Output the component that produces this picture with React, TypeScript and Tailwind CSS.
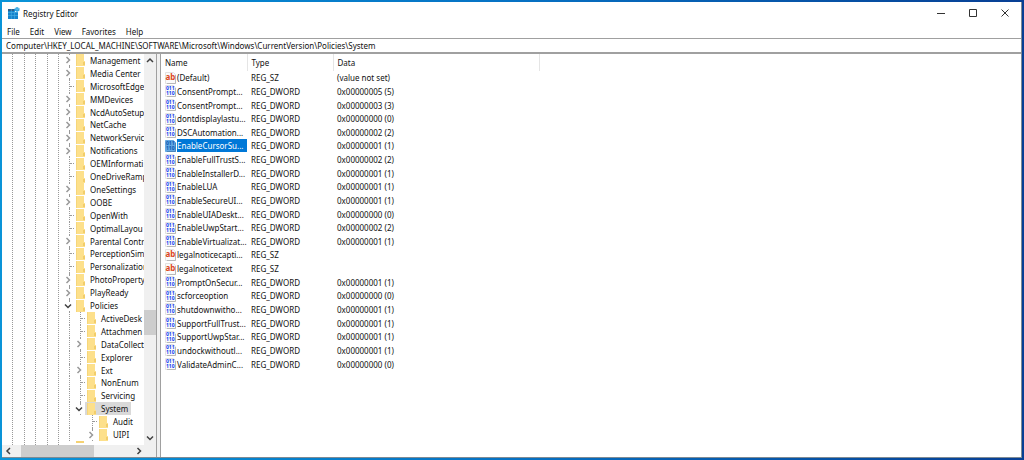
import clsx from "clsx";

type TreeNode = {
	label: string;
	depth: number;
	state?: "open" | "closed";
	selected?: boolean;
};

type RegistryValue = {
	name: string;
	type: "REG_SZ" | "REG_DWORD";
	data: string;
	selected?: boolean;
};

const MENUS = ["File", "Edit", "View", "Favorites", "Help"];

const TREE: TreeNode[] = [
	{ label: "Management", depth: 0, state: "closed" },
	{ label: "Media Center", depth: 0, state: "closed" },
	{ label: "MicrosoftEdge", depth: 0 },
	{ label: "MMDevices", depth: 0, state: "closed" },
	{ label: "NcdAutoSetup", depth: 0, state: "closed" },
	{ label: "NetCache", depth: 0, state: "closed" },
	{ label: "NetworkServic", depth: 0, state: "closed" },
	{ label: "Notifications", depth: 0, state: "closed" },
	{ label: "OEMInformati", depth: 0 },
	{ label: "OneDriveRamp", depth: 0 },
	{ label: "OneSettings", depth: 0, state: "closed" },
	{ label: "OOBE", depth: 0, state: "closed" },
	{ label: "OpenWith", depth: 0 },
	{ label: "OptimalLayou", depth: 0 },
	{ label: "Parental Contr", depth: 0, state: "closed" },
	{ label: "PerceptionSim", depth: 0 },
	{ label: "Personalization", depth: 0 },
	{ label: "PhotoProperty", depth: 0, state: "closed" },
	{ label: "PlayReady", depth: 0, state: "closed" },
	{ label: "Policies", depth: 0, state: "open" },
	{ label: "ActiveDesk", depth: 1 },
	{ label: "Attachmen", depth: 1 },
	{ label: "DataCollect", depth: 1, state: "closed" },
	{ label: "Explorer", depth: 1 },
	{ label: "Ext", depth: 1, state: "closed" },
	{ label: "NonEnum", depth: 1 },
	{ label: "Servicing", depth: 1 },
	{ label: "System", depth: 1, state: "open", selected: true },
	{ label: "Audit", depth: 2 },
	{ label: "UIPI", depth: 2, state: "closed" }
];

const VALUES: RegistryValue[] = [
	{ name: "(Default)", type: "REG_SZ", data: "(value not set)" },
	{ name: "ConsentPrompt...", type: "REG_DWORD", data: "0x00000005 (5)" },
	{ name: "ConsentPrompt...", type: "REG_DWORD", data: "0x00000003 (3)" },
	{ name: "dontdisplaylastu...", type: "REG_DWORD", data: "0x00000000 (0)" },
	{ name: "DSCAutomation...", type: "REG_DWORD", data: "0x00000002 (2)" },
	{ name: "EnableCursorSu...", type: "REG_DWORD", data: "0x00000001 (1)", selected: true },
	{ name: "EnableFullTrustS...", type: "REG_DWORD", data: "0x00000002 (2)" },
	{ name: "EnableInstallerD...", type: "REG_DWORD", data: "0x00000001 (1)" },
	{ name: "EnableLUA", type: "REG_DWORD", data: "0x00000001 (1)" },
	{ name: "EnableSecureUI...", type: "REG_DWORD", data: "0x00000001 (1)" },
	{ name: "EnableUIADeskt...", type: "REG_DWORD", data: "0x00000000 (0)" },
	{ name: "EnableUwpStart...", type: "REG_DWORD", data: "0x00000002 (2)" },
	{ name: "EnableVirtualizat...", type: "REG_DWORD", data: "0x00000001 (1)" },
	{ name: "legalnoticecapti...", type: "REG_SZ", data: "" },
	{ name: "legalnoticetext", type: "REG_SZ", data: "" },
	{ name: "PromptOnSecur...", type: "REG_DWORD", data: "0x00000001 (1)" },
	{ name: "scforceoption", type: "REG_DWORD", data: "0x00000000 (0)" },
	{ name: "shutdownwitho...", type: "REG_DWORD", data: "0x00000001 (1)" },
	{ name: "SupportFullTrust...", type: "REG_DWORD", data: "0x00000001 (1)" },
	{ name: "SupportUwpStar...", type: "REG_DWORD", data: "0x00000001 (1)" },
	{ name: "undockwithoutl...", type: "REG_DWORD", data: "0x00000001 (1)" },
	{ name: "ValidateAdminC...", type: "REG_DWORD", data: "0x00000000 (0)" }
];

function AppIcon() {
	return (
		<svg viewBox="0 0 12 12" className="h-3 w-3 shrink-0" aria-hidden="true">
			<path d="M0 2h7v3h3v7H0z" fill="#1583cc" />
			<path d="M0 2h6v2H0z" fill="#2b5f8c" />
			<path d="M0 5.5h10M0 8.5h10M3.3 2v10M6.6 4v8" stroke="#4fb4e6" strokeWidth="0.6" />
			<path d="M9 0l2.5 1.2v2.4L9 5 6.7 3.6V1.2z" fill="#2ea3e0" />
			<path d="M6.7 1.2L9 2.4l2.5-1.2" stroke="#9ddcf7" strokeWidth="0.5" fill="none" />
		</svg>
	);
}

function FolderIcon() {
	return (
		<svg viewBox="0 0 11 12" className="h-3 w-[11px] shrink-0" aria-hidden="true">
			<path d="M1 0h8v7h1v5H1z" fill="#fde08b" />
			<path d="M1 0h1v12H1z" fill="#f6d67a" />
			<path d="M8 8h2v3H8z" fill="#f2cd6b" />
		</svg>
	);
}

function Chevron({ direction, className }: { direction: "up" | "down" | "left" | "right"; className?: string }) {
	const paths = {
		up: "M2 6l3-3 3 3",
		down: "M2 3.5l3 3 3-3",
		left: "M6 2L3 5l3 3",
		right: "M3.5 2l3 3-3 3"
	};

	return (
		<svg viewBox="0 0 10 10" className={clsx("h-[10px] w-[10px] shrink-0", className)} aria-hidden="true">
			<path d={paths[direction]} fill="none" stroke="currentColor" strokeWidth="1.5" />
		</svg>
	);
}

function ValueIcon({ type, selected }: { type: RegistryValue["type"]; selected?: boolean }) {
	return (
		<svg viewBox="0 0 11 12" className="h-3 w-[11px] shrink-0" aria-hidden="true">
			<path d="M.5.5h8l2 2v9H.5z" fill={selected ? "#63a8e4" : "#fafafa"} stroke={selected ? "#63a8e4" : "#e2e2e2"} />
			<path d="M10.5 3v8.5H2" fill="none" stroke={selected ? "#4a86bb" : "#b8b8b8"} />
			{type === "REG_SZ" ? (
				<text x="0.5" y="8" fontSize="8" fontWeight="700" fill="#dc4520">
					ab
				</text>
			) : (
				<g fontSize="5" fontWeight="700" fill={selected ? "#0b57b0" : "#0a3cf0"}>
					<text x="1" y="5">
						011
					</text>
					<text x="1" y="10">
						110
					</text>
				</g>
			)}
		</svg>
	);
}

function TreeGuide() {
	return <span className="w-px shrink-0 self-stretch border-l border-dotted border-[#999]" />;
}

function TreeRow({ node }: { node: TreeNode }) {
	return (
		<li className="flex min-h-0 items-center whitespace-nowrap">
			{node.depth > 0 && (
				<span className={clsx("flex shrink-0 self-stretch pl-[6px]", node.depth === 1 ? "w-[11px]" : "w-[23px]")}>
					<TreeGuide />
				</span>
			)}
			<span className="flex w-3 shrink-0 items-center self-stretch">
				{node.state ? (
					<button type="button" aria-label={`Toggle ${node.label}`} className="flex h-full flex-col">
						<span className="ml-[6px] flex-1 border-l border-dotted border-[#999]" />
						<Chevron
							direction={node.state === "open" ? "down" : "right"}
							className={node.state === "open" ? "text-[#404040]" : "text-[#999]"}
						/>
						<span className="ml-[6px] flex-1 border-l border-dotted border-[#999]" />
					</button>
				) : (
					<>
						<span className="ml-[6px] self-stretch border-l border-dotted border-[#999]" />
						<span className="w-1 border-t border-dotted border-[#999]" />
					</>
				)}
			</span>
			<span className={clsx("-ml-px flex items-center self-stretch pr-[3px]", node.selected && "bg-[#d9d9d9]")}>
				<span className="flex w-4 shrink-0 pl-px">
					<FolderIcon />
				</span>
				{node.label}
			</span>
		</li>
	);
}

function TreePane() {
	return (
		<aside className="flex w-[155px] shrink-0 flex-col border-r border-[#a0a0a0]">
			<div className="flex min-h-0 flex-1">
				<div className="flex min-w-0 flex-1 overflow-hidden">
					<div className="flex w-[61px] shrink-0 justify-between self-stretch pr-1 pl-[10px]" aria-hidden="true">
						{[0, 1, 2, 3, 4].map((level) => (
							<TreeGuide key={level} />
						))}
					</div>
					<div className="min-w-0">
						<ul className="grid h-[387px] auto-rows-fr">
							{TREE.map((node) => (
								<TreeRow key={node.label} node={node} />
							))}
						</ul>
						<div className="ml-[13px] h-[2px] w-2 bg-[#f5d272]" />
					</div>
				</div>
				<div className="flex w-3 shrink-0 flex-col items-center bg-[#f0f0f0] text-[#404040]">
					<button type="button" aria-label="Scroll up" className="py-[2px]">
						<Chevron direction="up" />
					</button>
					<span className="flex-[240]" />
					<span className="w-full flex-[25] bg-[#cdcdcd]" />
					<span className="flex-[95]" />
					<button type="button" aria-label="Scroll down" className="py-[2px]">
						<Chevron direction="down" />
					</button>
				</div>
			</div>
			<div className="flex h-3 shrink-0 items-center bg-[#f0f0f0] pr-3 text-[#404040]">
				<button type="button" aria-label="Scroll left" className="flex w-[19px] justify-start pl-[2px]">
					<Chevron direction="left" />
				</button>
				<span className="w-[73px] self-stretch bg-[#cdcdcd]" />
				<button type="button" aria-label="Scroll right" className="ml-auto flex">
					<Chevron direction="right" />
				</button>
			</div>
		</aside>
	);
}

function ValueTable() {
	return (
		<main className="min-w-0 flex-1 overflow-hidden border-l border-[#a0a0a0] bg-white">
			<table className="h-[317px] w-full table-fixed border-collapse text-left whitespace-nowrap">
				<colgroup>
					<col className="w-[86px]" />
					<col className="w-[86px]" />
					<col className="w-[206px]" />
					<col />
				</colgroup>
				<thead>
					<tr className="h-[17px]">
						{["Name", "Type", "Data"].map((heading) => (
							<th key={heading} scope="col" className="border-r border-[#e5e5e5] py-0 pl-1 font-normal">
								{heading}
							</th>
						))}
						<td />
					</tr>
				</thead>
				<tbody>
					{VALUES.map((value, index) => (
						<tr key={index}>
							<td className="p-0 pl-1">
								<span className="flex items-center gap-px">
									<ValueIcon type={value.type} selected={value.selected} />
									<span className={clsx(value.selected && "flex-1 bg-[#0078d7] text-white")}>{value.name}</span>
								</span>
							</td>
							<td className="p-0 pl-1">{value.type}</td>
							<td className="p-0 pl-1">{value.data}</td>
							<td />
						</tr>
					))}
				</tbody>
			</table>
		</main>
	);
}

export default function App() {
	return (
		<div className="h-screen bg-linear-to-r from-[#0a94d8] via-[#0672c4] to-[#083f94] p-[2px] font-['Noto_Sans','Open_Sans',sans-serif] text-[8px] leading-[13px] text-[#111]">
			<div className="flex h-full flex-col overflow-hidden border-r border-b border-[#7f8b94] bg-white">
				<header className="flex h-[22px] shrink-0 items-center pl-[6px]">
					<AppIcon />
					<h1 className="ml-[3px] flex-1">Registry Editor</h1>
					<button type="button" aria-label="Minimize" className="flex w-8 justify-center">
						<svg viewBox="0 0 8 8" className="h-2 w-2">
							<path d="M0 4.5h8" stroke="#333" />
						</svg>
					</button>
					<button type="button" aria-label="Maximize" className="flex w-8 justify-center">
						<svg viewBox="0 0 8 8" className="h-2 w-2">
							<path d="M.5.5h7v7h-7z" fill="none" stroke="#333" />
						</svg>
					</button>
					<button type="button" aria-label="Close" className="flex w-8 justify-center">
						<svg viewBox="0 0 8 8" className="h-2 w-2">
							<path d="M.5.5l7 7M7.5.5l-7 7" stroke="#333" />
						</svg>
					</button>
				</header>
				<nav className="flex h-[14px] shrink-0 items-center gap-[10px] pl-[5px]">
					{MENUS.map((menu) => (
						<button key={menu} type="button">
							{menu}
						</button>
					))}
				</nav>
				<input
					aria-label="Registry path"
					defaultValue="Computer\HKEY_LOCAL_MACHINE\SOFTWARE\Microsoft\Windows\CurrentVersion\Policies\System"
					className="h-4 w-full shrink-0 border-y border-t-[#a0a0a0] border-b-[#a0a0a0] border-b-2 pl-1 outline-none"
				/>
				<div className="flex min-h-0 flex-1 gap-[3px] bg-[#f0f0f0]">
					<div className="flex bg-white">
						<TreePane />
					</div>
					<ValueTable />
				</div>
			</div>
		</div>
	);
}
